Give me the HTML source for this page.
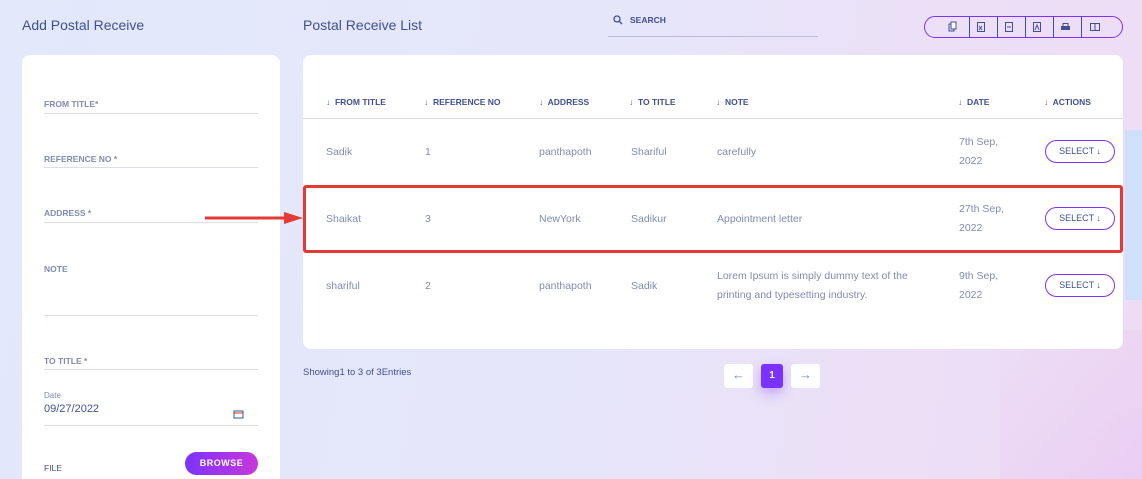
<!DOCTYPE html>
<html><head><style>
*{margin:0;padding:0;box-sizing:border-box}
html,body{width:1142px;height:479px;overflow:hidden}
body{position:relative;font-family:"Liberation Sans",sans-serif;background:linear-gradient(100deg,#e2e9fb 0%,#e6e6fa 50%,#ecdff6 80%,#eedcf5 100%);color:#415094}
.a{position:absolute}
.t{font-size:14px;color:#415094}
.card{background:#fff;border-radius:8px}
.lbl{font-size:8.5px;color:#828bb2;font-weight:bold;text-transform:uppercase}
.ln{height:1px;background:#dcdde6;width:214px;left:44px}
.h{font-size:8.5px;font-weight:bold;color:#415094}
.c{font-size:10.5px;color:#828bb2}
.sel{width:70px;height:23px;border:1px solid #7c32ff;border-radius:12px;font-size:9px;color:#415094;text-align:center;line-height:21px}
</style></head><body>
<div class="a" style="left:1125px;top:130px;width:17px;height:170px;background:#cfe0fa"></div>
<div class="a" style="left:1000px;top:330px;width:142px;height:149px;background:linear-gradient(135deg,rgba(255,255,255,0),rgba(230,190,240,.45))"></div>
<div class="a t" style="left:22px;top:17px">Add Postal Receive</div>
<div class="a t" style="left:303px;top:17px">Postal Receive List</div>
<svg class="a" style="left:613px;top:15px" width="10" height="10" viewBox="0 0 10 10"><circle cx="4" cy="4" r="3" fill="none" stroke="#415094" stroke-width="1.3"/><path d="M6 6l3 3" stroke="#415094" stroke-width="1.3"/></svg>
<div class="a" style="left:630px;top:15px;font-size:8.5px;font-weight:bold;color:#415094">SEARCH</div>
<div class="a" style="left:608px;top:36px;width:210px;height:1px;background:#b9bdd6"></div>
<div class="a" style="left:924px;top:16px;width:199px;height:22px;border:1.5px solid #7c32ff;border-radius:11px"></div>
<div class="a" style="left:969px;top:17px;width:1px;height:20px;background:#415094"></div>
<div class="a" style="left:997px;top:17px;width:1px;height:20px;background:#415094"></div>
<div class="a" style="left:1025px;top:17px;width:1px;height:20px;background:#415094"></div>
<div class="a" style="left:1053px;top:17px;width:1px;height:20px;background:#415094"></div>
<div class="a" style="left:1081px;top:17px;width:1px;height:20px;background:#415094"></div>
<svg class="a" style="left:947px;top:21px" width="140" height="12" viewBox="0 0 140 12" fill="none" stroke="#415094" stroke-width="1">
<rect x="2" y="3" width="5" height="7"/><rect x="4" y="1" width="5" height="7" fill="#fff"/>
<rect x="30.5" y="1.5" width="7" height="9"/><path d="M32 5l3 4M35 5l-3 4"/>
<rect x="58.5" y="1.5" width="7" height="9"/><path d="M60 6h4"/>
<rect x="86.5" y="1.5" width="7" height="9"/><path d="M88 9l2-5 2 5"/>
<rect x="114.5" y="5.5" width="8" height="3" fill="#415094"/><rect x="116" y="2.5" width="5" height="3"/>
</svg>
<svg class="a" style="left:1089px;top:22px" width="12" height="10" fill="none" stroke="#415094"><rect x="1.5" y="1.5" width="9" height="7"/><path d="M6 1.5v7"/></svg>

<div class="a card" style="left:22px;top:55px;width:258px;height:424px;border-radius:8px 8px 0 0"></div>
<div class="a lbl" style="left:44px;top:99px">FROM TITLE*</div><div class="a ln" style="top:113px"></div>
<div class="a lbl" style="left:44px;top:154px">REFERENCE NO *</div><div class="a ln" style="top:167px"></div>
<div class="a lbl" style="left:44px;top:208px">ADDRESS *</div><div class="a ln" style="top:222px"></div>
<div class="a lbl" style="left:44px;top:264px">NOTE</div><div class="a ln" style="top:315px"></div>
<div class="a lbl" style="left:44px;top:356px">TO TITLE *</div><div class="a ln" style="top:369px"></div>
<div class="a" style="left:44px;top:391px;font-size:8px;color:#828bb2">Date</div>
<div class="a" style="left:44px;top:403px;font-size:11px;color:#415094">09/27/2022</div>
<svg class="a" style="left:233px;top:409px" width="11" height="10" fill="none" stroke="#415094"><rect x="1" y="2" width="9" height="7"/><path d="M1 4h9" stroke="#c0392b"/></svg>
<div class="a ln" style="top:425px"></div>
<div class="a" style="left:44px;top:463px;font-size:8.5px;color:#415094">FILE</div>
<div class="a" style="left:185px;top:452px;width:73px;height:23px;border-radius:12px;background:linear-gradient(90deg,#7c32ff,#c738d8);color:#fff;font-size:9px;font-weight:bold;text-align:center;line-height:23px;letter-spacing:.5px">BROWSE</div>

<div class="a card" style="left:303px;top:55px;width:820px;height:294px"></div>
<div class="a h" style="left:326px;top:97px">↓&nbsp; FROM TITLE</div>
<div class="a h" style="left:424px;top:97px">↓&nbsp; REFERENCE NO</div>
<div class="a h" style="left:539px;top:97px">↓&nbsp; ADDRESS</div>
<div class="a h" style="left:629px;top:97px">↓&nbsp; TO TITLE</div>
<div class="a h" style="left:716px;top:97px">↓&nbsp; NOTE</div>
<div class="a h" style="left:958px;top:97px">↓&nbsp; DATE</div>
<div class="a h" style="left:1044px;top:97px">↓&nbsp; ACTIONS</div>
<div class="a" style="left:303px;top:118px;width:820px;height:1px;background:#dcd7ef"></div>

<div class="a c" style="left:326px;top:146px">Sadik</div><div class="a c" style="left:425px;top:146px">1</div><div class="a c" style="left:539px;top:146px">panthapoth</div><div class="a c" style="left:631px;top:146px">Shariful</div><div class="a c" style="left:717px;top:146px">carefully</div>
<div class="a c" style="left:959px;top:133px;line-height:19px">7th Sep,<br>2022</div>
<div class="a sel" style="left:1045px;top:140px">SELECT ↓</div>

<div class="a c" style="left:326px;top:213px">Shaikat</div><div class="a c" style="left:425px;top:213px">3</div><div class="a c" style="left:539px;top:213px">NewYork</div><div class="a c" style="left:631px;top:213px">Sadikur</div><div class="a c" style="left:717px;top:213px">Appointment letter</div>
<div class="a c" style="left:959px;top:200px;line-height:19px">27th Sep,<br>2022</div>
<div class="a sel" style="left:1045px;top:207px">SELECT ↓</div>

<div class="a c" style="left:326px;top:280px">shariful</div><div class="a c" style="left:425px;top:280px">2</div><div class="a c" style="left:539px;top:280px">panthapoth</div><div class="a c" style="left:631px;top:280px">Sadik</div><div class="a c" style="left:717px;top:267px;line-height:19px">Lorem Ipsum is simply dummy text of the<br>printing and typesetting industry.</div>
<div class="a c" style="left:959px;top:267px;line-height:19px">9th Sep,<br>2022</div>
<div class="a sel" style="left:1045px;top:274px">SELECT ↓</div>

<div class="a" style="left:303px;top:185px;width:820px;height:68px;border:3px solid #e53935;border-radius:3px"></div>
<svg class="a" style="left:204px;top:211px" width="100" height="14"><path d="M1 7h82" stroke="#e53935" stroke-width="3"/><path d="M80 1l19 6-19 6z" fill="#e53935"/></svg>

<div class="a" style="left:303px;top:367px;font-size:9.5px;color:#415094">Showing1 to 3 of 3Entries</div>
<div class="a" style="left:724px;top:364px;width:29px;height:24px;background:#fff;border-radius:3px;text-align:center;line-height:22px;color:#828bb2;font-size:13px">←</div>
<div class="a" style="left:761px;top:364px;width:22px;height:24px;background:#7c32ff;border-radius:3px;text-align:center;line-height:24px;color:#fff;font-size:10px;font-weight:bold;box-shadow:0 5px 12px rgba(124,50,255,.35)">1</div>
<div class="a" style="left:791px;top:364px;width:29px;height:24px;background:#fff;border-radius:3px;text-align:center;line-height:22px;color:#828bb2;font-size:13px">→</div>
</body></html>
